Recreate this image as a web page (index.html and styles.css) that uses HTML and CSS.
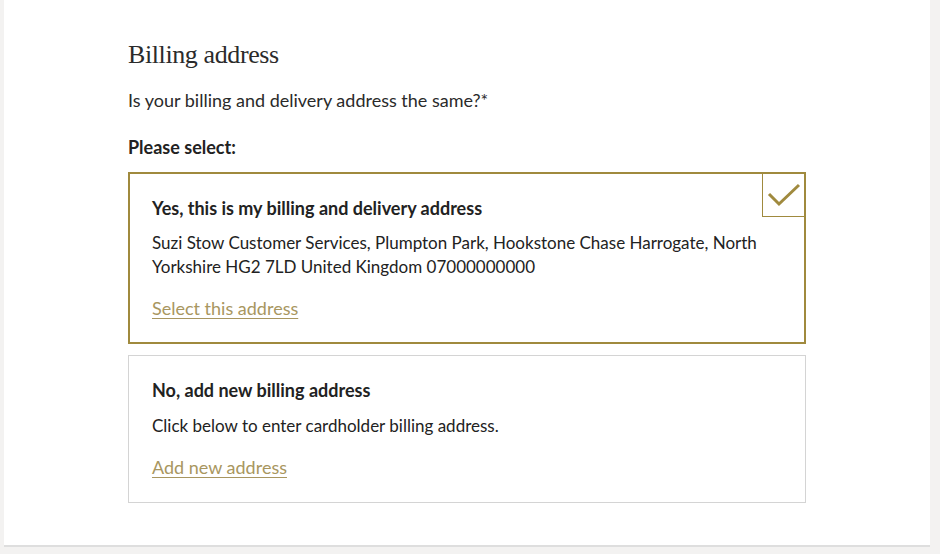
FILE: index.html
```html
<!DOCTYPE html>
<html>

<head>
    <meta charset="UTF-8">
    <title>Billing address</title>
    <link rel="stylesheet" href="styles.css">
</head>

<body>
    <div class="page">
        <h2 class="title">Billing address</h2>
        <p class="question">Is your billing and delivery address the same?*</p>
        <p class="select-label">Please select:</p>

        <div class="option selected">
            <span class="tick">
                <svg width="36" height="26" viewBox="0 0 36 26">
                    <polyline points="3,12 13,22 33,3" fill="none" stroke="#a08a3e" stroke-width="3" />
                </svg>
            </span>
            <div class="option-title">Yes, this is my billing and delivery address</div>
            <div class="option-text">Suzi Stow Customer Services, Plumpton Park, Hookstone Chase Harrogate, North Yorkshire HG2 7LD United Kingdom 07000000000</div>
            <a class="option-link" href="#">Select this address</a>
        </div>

        <div class="option">
            <div class="option-title">No, add new billing address</div>
            <div class="option-text">Click below to enter cardholder billing address.</div>
            <a class="option-link" href="#">Add new address</a>
        </div>
    </div>
</body>

</html>
```

FILE: styles.css
```css
body {
    margin: 0;
    background-color: #f3f2f1;
    font-family: Lato, "Open Sans", Arial, sans-serif;
    color: #222;
    height: 554px;
    overflow: hidden;
}

.page {
    background: white;
    margin-left: 4px;
    width: 926px;
    height: 547px;
    box-sizing: border-box;
    padding: 38px 124px 0;
    border-bottom: 2px solid #dedede;
}

.title {
    font-family: "Liberation Serif", "DejaVu Serif", serif;
    font-weight: normal;
    font-size: 26px;
    color: #2b2b2b;
    margin: 0 0 16px;
    line-height: 34px;
    letter-spacing: -0.4px;
}

.question {
    font-size: 18px;
    margin: 0 0 23px;
    line-height: 24px;
    color: #2a2a2a;
}

.select-label {
    font-size: 18px;
    font-weight: bold;
    margin: 0 0 13px;
    line-height: 24px;
}

.option {
    position: relative;
    border: 1px solid #d4d4d4;
    padding: 22px 24px 23px 23px;
    margin-bottom: 11px;
}

.option.selected {
    border: 2px solid #a08a3e;
    padding: 22px 22px 22px 22px;
}

.tick {
    position: absolute;
    top: -2px;
    right: -2px;
    width: 41px;
    height: 42px;
    border-left: 1px solid #a08a3e;
    border-bottom: 1px solid #a08a3e;
    border-top: 2px solid #a08a3e;
    border-right: 2px solid #a08a3e;
    display: flex;
    align-items: center;
    justify-content: center;
}

.option-title {
    font-weight: bold;
    font-size: 18px;
    line-height: 24px;
    margin-bottom: 11px;
}

.option:not(.selected) .option-title {
    margin-bottom: 12px;
}

.option-text {
    font-size: 17px;
    line-height: 24px;
    margin-bottom: 17px;
}

.option-link {
    display: inline-block;
    font-size: 18px;
    line-height: 24px;
    color: #a89660;
    text-decoration: underline;
    text-underline-offset: 3px;
}
```
